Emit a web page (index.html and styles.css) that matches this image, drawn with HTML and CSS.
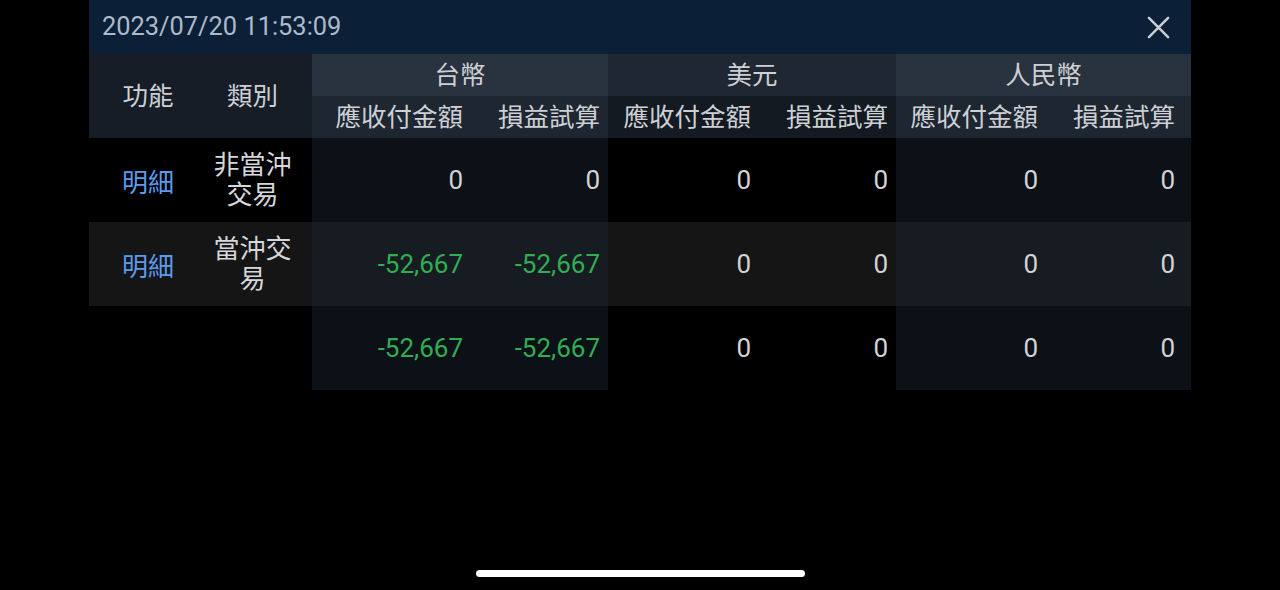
FILE: index.html
```html
<!DOCTYPE html>
<html lang="zh-Hant">
<head>
<meta charset="utf-8">
<title>損益試算</title>
<link rel="stylesheet" href="styles.css">
</head>
<body>
<div class="screen">
  <div class="panel">
    <div class="titlebar">
      <span class="time">2023/07/20 11:53:09</span>
      <svg class="close" width="24" height="24" viewBox="0 0 24 24" aria-label="close">
        <path d="M2 2 L22 22 M22 2 L2 22" stroke="#c9ced6" stroke-width="2.6" stroke-linecap="round" fill="none"/>
      </svg>
    </div>
    <table class="grid">
      <colgroup>
        <col class="w-func"><col class="w-type">
        <col class="w-a1"><col class="w-b1">
        <col class="w-a2"><col class="w-b2">
        <col class="w-a3"><col class="w-b3">
      </colgroup>
      <thead>
        <tr class="h1">
          <th rowspan="2" class="fix">功能</th>
          <th rowspan="2" class="fix type">類別</th>
          <th colspan="2" class="grp g-odd">台幣</th>
          <th colspan="2" class="grp g-even">美元</th>
          <th colspan="2" class="grp g-odd">人民幣</th>
        </tr>
        <tr class="h2">
          <th class="sub s-odd">應收付金額</th>
          <th class="sub s-odd">損益試算</th>
          <th class="sub s-even">應收付金額</th>
          <th class="sub s-even">損益試算</th>
          <th class="sub s-odd">應收付金額</th>
          <th class="sub s-odd last">損益試算</th>
        </tr>
      </thead>
      <tbody>
        <tr class="r-plain">
          <td class="link">明細</td>
          <td class="type">非當沖<br>交易</td>
          <td class="num c-odd">0</td>
          <td class="num c-odd">0</td>
          <td class="num c-even">0</td>
          <td class="num c-even">0</td>
          <td class="num c-odd">0</td>
          <td class="num c-odd last">0</td>
        </tr>
        <tr class="r-alt">
          <td class="link">明細</td>
          <td class="type">當沖交<br>易</td>
          <td class="num c-odd neg">-52,667</td>
          <td class="num c-odd neg">-52,667</td>
          <td class="num c-even">0</td>
          <td class="num c-even">0</td>
          <td class="num c-odd">0</td>
          <td class="num c-odd last">0</td>
        </tr>
        <tr class="r-plain">
          <td></td>
          <td class="type"></td>
          <td class="num c-odd neg">-52,667</td>
          <td class="num c-odd neg">-52,667</td>
          <td class="num c-even">0</td>
          <td class="num c-even">0</td>
          <td class="num c-odd">0</td>
          <td class="num c-odd last">0</td>
        </tr>
      </tbody>
    </table>
  </div>
  <div class="home-indicator"></div>
</div>
</body>
</html>
```
FILE: styles.css
```css
* { box-sizing: border-box; }
html, body {
  margin: 0;
  padding: 0;
  background: #000;
}
body {
  font-family: Roboto, "Noto Sans CJK TC", "Noto Sans", sans-serif;
  color: #d2d4d8;
}
.screen {
  position: relative;
  width: 1280px;
  height: 590px;
  overflow: hidden;
  background: #000;
}
.panel {
  margin-left: 89px;
  width: 1102px;
}
.titlebar {
  height: 54px;
  background: #0b2037;
  display: flex;
  align-items: center;
  justify-content: space-between;
  padding: 0 21px 2px 13px;
}
.time {
  font-size: 25.4px;
  color: #aebacb;
}
.close { display: block; width: 23px; height: 23px; margin-top: 2px; }

.grid {
  width: 1102px;
  border-collapse: collapse;
  table-layout: fixed;
  font-size: 26px;
}
.w-func { width: 118px; }
.w-type { width: 105px; }
.w-a1 { width: 159px; }
.w-b1 { width: 137px; }
.w-a2 { width: 151px; }
.w-b2 { width: 137px; }
.w-a3 { width: 150px; }
.w-b3 { width: 145px; }

th, td { padding: 0; font-weight: 400; white-space: nowrap; }
thead th { color: #cdd0d5; line-height: 30px; font-size: 25.5px; }
.h1 th { height: 42px; padding-bottom: 1px; }
.h2 th { height: 42px; padding-bottom: 1px; }
.fix { background: #161d27; text-align: center; }
th.fix { padding-bottom: 0; }
th.type { padding-right: 14px; }
.grp { text-align: center; }
.g-odd { background: #29333f; }
.g-even { background: #1f2732; }
.sub { text-align: right; padding-right: 8px; }
.s-odd { background: #1e2631; }
.s-even { background: #141a22; }
.sub.last, .num.last { padding-right: 16px; }

tbody tr { height: 84px; }
tbody td { vertical-align: middle; }
.link { color: #5b9bef; text-align: center; }
td.type { text-align: center; line-height: 30px; padding-right: 14px; color: #d6d7d9; }
.num { text-align: right; padding-right: 8px; color: #d2d3d5; }
.neg { color: #2fae52; }

.r-plain td { background: #000; }
.r-plain td.c-odd { background: #0c1017; }
.r-alt td { background: #151515; }
.r-alt td.c-odd { background: #171b22; }

.home-indicator {
  position: absolute;
  left: 476px;
  top: 570px;
  width: 329px;
  height: 7px;
  border-radius: 4px;
  background: #fff;
}
```
